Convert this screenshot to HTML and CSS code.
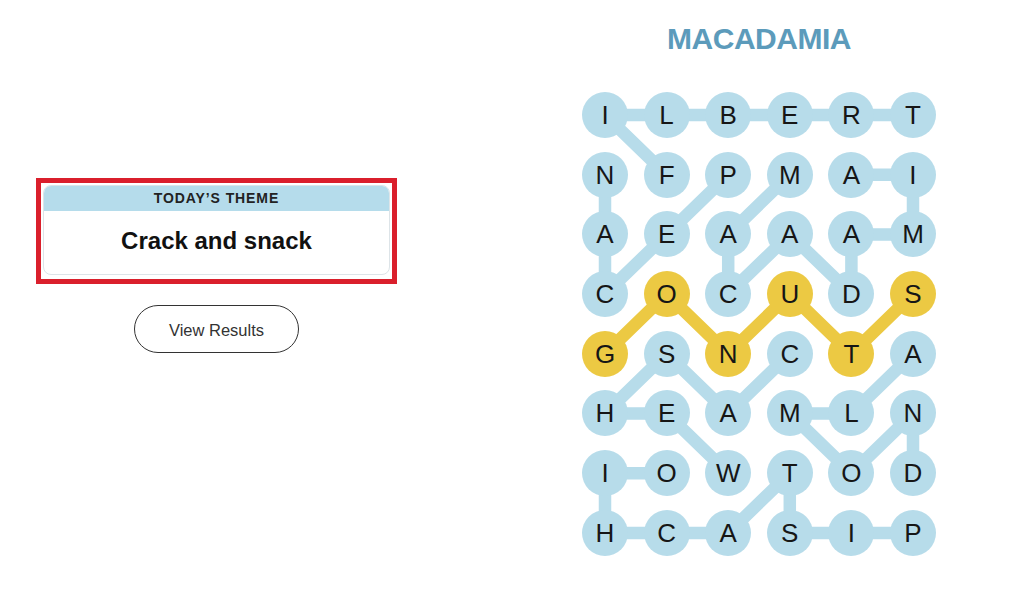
FILE: index.html
```html
<!DOCTYPE html>
<html lang="en">
<head>
<meta charset="utf-8">
<title>Strands</title>
<link rel="stylesheet" href="styles.css">
</head>
<body>
<main class="page">
  <section class="side">
    <div class="highlight">
      <div class="theme-card">
        <div class="theme-head">TODAY’S THEME</div>
        <div class="theme-body">Crack and snack</div>
      </div>
    </div>
    <button class="results-btn" type="button">View Results</button>
  </section>
  <section class="board">
    <h1 class="word">MACADAMIA</h1>
    <div class="grid-wrap">
      <svg class="paths" viewBox="0 0 354 464" width="354" height="464" aria-hidden="true">
        <g class="blue">
          <polyline points="84.6,82.7 23,23 331,23"/>
          <polyline points="146.2,82.7 84.6,142.4 23,202.1 23,142.4 23,82.7"/>
          <polyline points="207.8,82.7 146.2,142.4 146.2,202.1 207.8,142.4 269.4,202.1 269.4,142.4 331,142.4 331,82.7 269.4,82.7"/>
          <polyline points="207.8,261.8 146.2,321.5 84.6,261.8 23,321.5 84.6,321.5 146.2,381.2"/>
          <polyline points="331,261.8 269.4,321.5 207.8,321.5 269.4,381.2 331,321.5 331,381.2"/>
          <polyline points="331,440.9 207.8,440.9 207.8,381.2 146.2,440.9 23,440.9 23,381.2 84.6,381.2"/>
        </g>
        <g class="gold">
          <polyline points="23,261.8 84.6,202.1 146.2,261.8 207.8,202.1 269.4,261.8 331,202.1"/>
        </g>
      </svg>
      <div class="grid">
        <span class="cell">I</span><span class="cell">L</span><span class="cell">B</span><span class="cell">E</span><span class="cell">R</span><span class="cell">T</span>
        <span class="cell">N</span><span class="cell">F</span><span class="cell">P</span><span class="cell">M</span><span class="cell">A</span><span class="cell">I</span>
        <span class="cell">A</span><span class="cell">E</span><span class="cell">A</span><span class="cell">A</span><span class="cell">A</span><span class="cell">M</span>
        <span class="cell">C</span><span class="cell span">O</span><span class="cell">C</span><span class="cell span">U</span><span class="cell">D</span><span class="cell span">S</span>
        <span class="cell span">G</span><span class="cell">S</span><span class="cell span">N</span><span class="cell">C</span><span class="cell span">T</span><span class="cell">A</span>
        <span class="cell">H</span><span class="cell">E</span><span class="cell">A</span><span class="cell">M</span><span class="cell">L</span><span class="cell">N</span>
        <span class="cell">I</span><span class="cell">O</span><span class="cell">W</span><span class="cell">T</span><span class="cell">O</span><span class="cell">D</span>
        <span class="cell">H</span><span class="cell">C</span><span class="cell">A</span><span class="cell">S</span><span class="cell">I</span><span class="cell">P</span>
      </div>
    </div>
  </section>
</main>
</body>
</html>
```
FILE: styles.css
```css
* { box-sizing: border-box; }

html, body {
  margin: 0;
  padding: 0;
  background: #ffffff;
}

body {
  font-family: "Liberation Sans", Arial, sans-serif;
  color: #121212;
  width: 1024px;
  height: 592px;
  overflow: hidden;
}

.page {
  display: flex;
  align-items: flex-start;
}

.side {
  width: 433px;
  padding-top: 178px;
  display: flex;
  flex-direction: column;
  align-items: center;
}

.highlight {
  width: 361px;
  height: 106px;
  border: 5px solid #da1f2c;
  padding: 2px 2px 4px 2px;
}

.theme-card {
  height: 100%;
  border: 1px solid #dde4e8;
  border-radius: 8px;
  overflow: hidden;
  display: flex;
  flex-direction: column;
}

.theme-head {
  height: 25px;
  flex: none;
  background: #b5dceb;
  text-align: center;
  font-size: 14px;
  font-weight: 700;
  letter-spacing: 0.9px;
  line-height: 25px;
  color: #222;
}

.theme-body {
  flex: 1;
  display: flex;
  align-items: center;
  justify-content: center;
  padding-bottom: 4px;
  font-size: 24px;
  font-weight: 700;
  color: #111;
}

.results-btn {
  margin-top: 21px;
  width: 165px;
  height: 48px;
  border: 1.5px solid #333;
  border-radius: 24px;
  background: #fff;
  font-family: "Liberation Sans", Arial, sans-serif;
  font-size: 16.5px;
  color: #333;
  padding: 3px 0 0;
}

.board {
  margin-left: 149px;
  width: 354px;
  display: flex;
  flex-direction: column;
  align-items: center;
}

.word {
  margin: 24px 0 38px;
  font-size: 30px;
  line-height: 30px;
  font-weight: 700;
  color: #5c9bbb;
  letter-spacing: -0.5px;
}

.grid-wrap {
  position: relative;
  width: 354px;
  height: 464px;
}

.paths {
  position: absolute;
  left: 0;
  top: 0;
}

.paths polyline {
  fill: none;
  stroke-width: 12.5;
  stroke-linecap: round;
  stroke-linejoin: round;
}

.paths .blue polyline { stroke: #b7dcea; }
.paths .gold polyline { stroke: #ecc943; }

.grid {
  position: relative;
  display: grid;
  grid-template-columns: repeat(6, 46px);
  grid-template-rows: repeat(8, 46px);
  column-gap: 15.6px;
  row-gap: 13.7px;
}

.cell {
  width: 46px;
  height: 46px;
  border-radius: 50%;
  background: #b7dcea;
  display: flex;
  align-items: center;
  justify-content: center;
  font-size: 26px;
  line-height: 1;
  color: #161616;
}

.cell.span { background: #ecc943; }
```
